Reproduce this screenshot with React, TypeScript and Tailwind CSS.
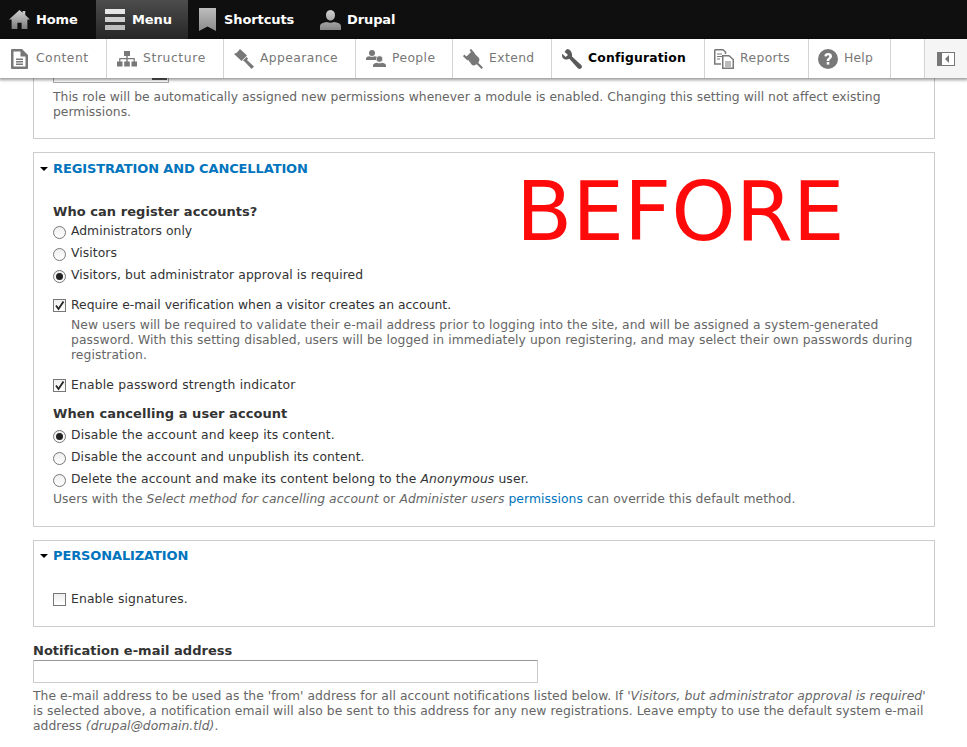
const Home = () => (
	<svg viewBox="0 0 20 18" className="w-[21px] h-[19px] shrink-0">
		<defs>
			<linearGradient id="g" x1="0" y1="0" x2="0" y2="1">
				<stop offset="0" stopColor="#d0d0d0" />
				<stop offset="1" stopColor="#7d7d7d" />
			</linearGradient>
		</defs>
		<path d="M10 0 L13 2.6 V1 H15.5 V4.8 L20 9 H17.5 V18 H12 V12 H8 V18 H2.5 V9 H0 Z" fill="url(#g)" />
	</svg>
);

const Bookmark = () => (
	<svg viewBox="0 0 17 23" className="w-[17px] h-[23px] shrink-0">
		<defs>
			<linearGradient id="b" x1="0" y1="0" x2="0" y2="1">
				<stop offset="0" stopColor="#bdbdbd" />
				<stop offset="1" stopColor="#8c8c8c" />
			</linearGradient>
		</defs>
		<path d="M0 0 H17 V23 L8.5 18.5 L0 23 Z" fill="url(#b)" />
	</svg>
);

const Person = () => (
	<svg viewBox="0 0 21 20" className="w-[21px] h-[20px] shrink-0">
		<defs>
			<linearGradient id="p" x1="0" y1="0" x2="0" y2="1">
				<stop offset="0" stopColor="#d0d0d0" />
				<stop offset="1" stopColor="#858585" />
			</linearGradient>
		</defs>
		<path d="M10.5 0 C13.4 0 15 2.2 15 5 C15 8 13.4 10.5 10.5 10.5 C7.6 10.5 6 8 6 5 C6 2.2 7.6 0 10.5 0 Z M0 20 V16.5 C0 13.5 3 12.6 7 12 C8.8 13 12.2 13 14 12 C18 12.6 21 13.5 21 16.5 V20 Z" fill="url(#p)" />
	</svg>
);

const FileIcon = () => (
	<svg viewBox="0 0 17 20" className="w-[17px] h-[20px] shrink-0" fill="#787878">
		<path fillRule="evenodd" d="M0 1 Q0 0 1 0 H11 L17 6 V19 Q17 20 16 20 H1 Q0 20 0 19 Z M2.5 2.5 V17.5 H14.5 V7.5 H9.5 V2.5 Z" />
		<path d="M5 9.5 H12 V11 H5 Z M5 12 H12 V13.5 H5 Z M5 14.5 H12 V16 H5 Z" />
	</svg>
);

const Sitemap = () => (
	<svg viewBox="0 0 20 16" className="w-[20px] h-[16px] shrink-0" fill="#787878">
		<path d="M7 0 H13 V5 H10.7 V7 H17.8 V10.5 H20 V15.5 H14.5 V10.5 H16.6 V8.2 H10.7 V10.5 H12.8 V15.5 H7.2 V10.5 H9.3 V8.2 H3.4 V10.5 H5.5 V15.5 H0 V10.5 H2.2 V7 H9.3 V5 H7 Z" />
	</svg>
);

const Brush = () => (
	<svg viewBox="0 0 20 20" className="w-[20px] h-[20px] shrink-0" fill="#787878">
		<path d="M6 0 L13 6.5 L7.5 12 L0 5 L3 3.5 Z" />
		<path d="M9 11.5 L12.5 8 L14 9.5 L13 11 L20 17.5 L17.5 20 L11 13 Z" />
	</svg>
);

const People = () => (
	<svg viewBox="0 0 20 17" className="w-[20px] h-[17px] shrink-0" fill="#787878">
		<circle cx="6" cy="3" r="3" />
		<path d="M0 10 V8.5 C0 7 2 6.5 3.5 6.3 C5 7 7 7 8.5 6.3 C10 6.5 12 7 12 8.5 V10 Z" />
		<circle cx="13.5" cy="9" r="3.2" stroke="#fff" strokeWidth="0.6" />
		<path d="M7 17 V15.3 C7 13.5 9.5 13 11 12.8 C12.5 13.5 14.5 13.5 16 12.8 C17.5 13 20 13.5 20 15.3 V17 Z" />
	</svg>
);

const Plug = () => (
	<svg viewBox="0 0 20 20" className="w-[20px] h-[20px] shrink-0" fill="#787878">
		<path d="M3 8 L9 2 L16 9 C17 11 16 13 14.5 14.5 C13 16 11 17 9 16 Z" />
		<path d="M6.5 1 L8.2 0 L12 4.5 L10 6 Z M0 7.2 L1.2 5.5 L6 9.5 L4.5 11.5 Z" />
		<path d="M13.5 15 L15 13.5 L20 18.5 L18.5 20 Z" />
	</svg>
);

const Wrench = () => (
	<svg viewBox="0 0 20 20" className="w-[20px] h-[20px] shrink-0" fill="#5a5a5a">
		<path d="M5 0 L2.5 2.8 L6 6 L3.5 8 L0.3 4.8 C-0.5 7.5 0.5 10 3.5 10.5 C5 10.8 6.3 10.5 7.3 9.8 L15.8 19.2 C16.8 20.2 18.2 20.2 19.2 19.3 C20.2 18.3 20.2 17 19.2 16 L10 7.5 C10.6 4 8.5 0 5 0 Z" />
	</svg>
);

const Reports = () => (
	<svg viewBox="0 0 20 20" className="w-[20px] h-[20px] shrink-0" fill="none" stroke="#787878">
		<path d="M0.75 0.75 H9 L11.5 3 V5" strokeWidth="1.5" />
		<path d="M0.75 0.75 V15 H7" strokeWidth="1.5" />
		<path d="M3 5 H8 M3 7.5 H8 M3 10 H6" strokeWidth="1.2" />
		<path d="M8.75 6.75 H15 L19.25 10.5 V19.25 H8.75 Z" strokeWidth="1.5" fill="#fff" />
		<path d="M11 13 H17 M11 15 H17 M11 17 H17" strokeWidth="1.2" />
	</svg>
);

const Help = () => (
	<svg viewBox="0 0 20 20" className="w-[20px] h-[20px] shrink-0">
		<circle cx="10" cy="10" r="10" fill="#787878" />
		<path d="M6.3 7.2 C6.5 4.8 8.2 4 10 4 C12.3 4 14 5.2 14 7.2 C14 9.8 11.3 9.8 11.3 12 H8.7 C8.7 9 11.2 9 11.2 7.4 C11.2 6.6 10.8 6.2 10 6.2 C9.2 6.2 8.9 6.8 8.8 7.6 Z" fill="#fff" />
		<rect x="8.7" y="13" width="2.6" height="2.6" fill="#fff" />
	</svg>
);

const tray = [
	{ label: "Content", icon: <FileIcon />, width: "w-[107px]", pl: "pl-[11px]", gap: "gap-2", track: "tracking-[0.5px]" },
	{ label: "Structure", icon: <Sitemap />, width: "w-[117px]", pl: "pl-[10px]", gap: "gap-[6px]", track: "tracking-[0.6px]" },
	{ label: "Appearance", icon: <Brush />, width: "w-[132px]", pl: "pl-[10px]", gap: "gap-[6px]", track: "tracking-[0.4px]" },
	{ label: "People", icon: <People />, width: "w-[97px]", pl: "pl-[10px]", gap: "gap-[6px]", track: "tracking-[0.4px]" },
	{ label: "Extend", icon: <Plug />, width: "w-[99px]", pl: "pl-[10px]", gap: "gap-[6px]", track: "tracking-[0.4px]" },
	{ label: "Configuration", icon: <Wrench />, width: "w-[153px]", pl: "pl-[10px]", gap: "gap-[6px]", track: "tracking-[0.2px]", active: true },
	{ label: "Reports", icon: <Reports />, width: "w-[104px]", pl: "pl-[9px]", gap: "gap-[6px]", track: "tracking-[0.4px]" },
	{ label: "Help", icon: <Help />, width: "w-[82px]", pl: "pl-[9px]", gap: "gap-[6px]", track: "tracking-[0.2px]" },
];

const Radio = ({ checked = false }: { checked?: boolean }) => (
	<span className="w-[13px] h-[13px] shrink-0 translate-y-[1px] rounded-full border border-[#777] bg-gradient-to-b from-[#eee] to-white flex items-center justify-center">
		{checked && <span className="w-[7px] h-[7px] rounded-full bg-[#222]" />}
	</span>
);

const Check = ({ checked = false }: { checked?: boolean }) => (
	<span className="w-[13px] h-[13px] shrink-0 border border-[#777] bg-gradient-to-b from-[#eee] to-white flex items-center justify-center">
		{checked && (
			<svg viewBox="0 0 11 11" className="w-[11px] h-[11px]">
				<path d="M2 5.5 L4.5 9 L9.5 1.5" fill="none" stroke="#222" strokeWidth="1.8" />
			</svg>
		)}
	</span>
);

const Option = ({ children, className = "" }: { children: React.ReactNode; className?: string }) => (
	<div className={`flex items-center gap-[5px] h-[16px] pl-[19px] text-[12.35px] leading-[16px] text-[#333] ${className}`}>{children}</div>
);

const Legend = ({ children }: { children: React.ReactNode }) => (
	<div className="flex items-center h-[16px] pl-[6px] gap-[5px] text-[13px] font-bold leading-[16px] text-[#0074bd] tracking-[-0.12px]">
		<span className="w-0 h-0 border-x-[4px] border-x-transparent border-t-[4px] border-t-black" />
		{children}
	</div>
);

const App = () => {
	return (
		<div className="relative h-[747px] overflow-hidden bg-white font-['DejaVu_Sans',sans-serif] text-[#333]">
			<div className="relative z-10">
				<div className="flex h-[39px] bg-[#0f0f0f] text-[13px] font-bold text-white tracking-[-0.1px]">
					<div className="flex items-center w-[96px] pl-[9px] gap-[6px]">
						<Home />
						Home
					</div>
					<div className="flex items-center w-[92px] pl-[9px] gap-[7px] bg-gradient-to-b from-[#4d4d4d] to-[#262626]">
						<span className="flex flex-col gap-[3px] w-[20px] shrink-0">
							<span className="h-[5px] bg-[#e6e6e6]" />
							<span className="h-[5px] bg-[#cfcfcf]" />
							<span className="h-[5px] bg-[#bdbdbd]" />
						</span>
						Menu
					</div>
					<div className="flex items-center w-[120px] pl-[11px] gap-[8px]">
						<Bookmark />
						Shortcuts
					</div>
					<div className="flex items-center pl-[12px] gap-[6px]">
						<Person />
						Drupal
					</div>
				</div>
				<div className="flex h-[39px] bg-white shadow-[0_1px_3px_1px_rgba(0,0,0,0.4)] text-[12.35px] text-[#777]">
					{tray.map((item) => (
						<div
							key={item.label}
							className={`flex items-center ${item.width} ${item.pl} ${item.gap} ${item.track} border-r border-[#d4d4d4] ${item.active ? "font-bold text-black" : ""}`}
						>
							{item.icon}
							{item.label}
						</div>
					))}
					<div className="w-[34px] border-r border-[#d4d4d4]" />
					<div className="flex-1 bg-[#f5f5f5] flex items-center pl-[12px]">
						<span className="flex w-[18px] h-[14px] border border-[#787878] bg-white">
							<span className="w-[4px] bg-[#787878]" />
							<span className="flex-1 flex items-center justify-center pr-[2px]">
								<span className="w-0 h-0 border-y-[4px] border-y-transparent border-r-[4px] border-r-[#777]" />
							</span>
						</span>
					</div>
				</div>
			</div>

			<div className="pl-[33px] pr-[32px]">
				<div className="h-[61px] border-x border-b border-[#ccc] px-[19px]">
					<div className="flex justify-end pr-[1px] w-[116px] h-[5px] border-x border-b border-[#aaa]">
						<span className="w-[15px] h-[2px] bg-[#555]" />
					</div>
					<p className="mt-[7px] text-[12.35px] leading-[15px] tracking-[0.025px] text-[#666]">
						This role will be automatically assigned new permissions whenever a module is enabled. Changing this setting will not affect existing permissions.
					</p>
				</div>

				<div className="relative mt-[13px] h-[375px] border border-[#ccc] pt-[8px]">
					<Legend>REGISTRATION AND CANCELLATION</Legend>
					<div className="mt-[27px] pl-[19px] text-[13px] font-bold leading-[16px] tracking-[0.05px] text-[#333]">Who can register accounts?</div>
					<Option className="mt-[3px] tracking-[0.03px]">
						<Radio />
						Administrators only
					</Option>
					<Option className="mt-[6px] tracking-[0.08px]">
						<Radio />
						Visitors
					</Option>
					<Option className="mt-[6px] tracking-[0.08px]">
						<Radio checked />
						Visitors, but administrator approval is required
					</Option>
					<Option className="mt-[14px] tracking-[0.015px]">
						<Check checked />
						Require e-mail verification when a visitor creates an account.
					</Option>
					<p className="mt-[5px] ml-[37px] mr-[20px] text-[12.35px] leading-[15px] tracking-[0.06px] text-[#666]">
						New users will be required to validate their e-mail address prior to logging into the site, and will be assigned a system-generated password. With this setting disabled, users will be logged in immediately upon registering, and may select their own passwords during registration.
					</p>
					<Option className="mt-[14px] tracking-[0.17px]">
						<Check checked />
						Enable password strength indicator
					</Option>
					<div className="mt-[13px] pl-[19px] text-[13px] font-bold leading-[16px] tracking-[0.05px] text-[#333]">When cancelling a user account</div>
					<Option className="mt-[5px] tracking-[0.15px]">
						<Radio checked />
						Disable the account and keep its content.
					</Option>
					<Option className="mt-[6px] tracking-[0.12px]">
						<Radio />
						Disable the account and unpublish its content.
					</Option>
					<Option className="mt-[6px] tracking-[0.12px]">
						<Radio />
						<span>
							Delete the account and make its content belong to the <em>Anonymous</em> user.
						</span>
					</Option>
					<p className="mt-[5px] pl-[19px] text-[12.35px] leading-[15px] tracking-[0.055px] text-[#666]">
						Users with the <em>Select method for cancelling account</em> or <em>Administer users</em> <a className="text-[#0074bd]">permissions</a> can override this default method.
					</p>
					<div className="absolute left-[482px] top-[-1px] text-[82px] leading-[120px] text-[#ff0a0a]">BEFORE</div>
				</div>

				<div className="mt-[13px] h-[87px] border border-[#ccc] pt-[7px]">
					<Legend>PERSONALIZATION</Legend>
					<Option className="mt-[27px] tracking-[0.13px]">
						<Check />
						Enable signatures.
					</Option>
				</div>

				<div className="mt-[16px] text-[13px] font-bold leading-[16px] tracking-[0.03px] text-[#333]">Notification e-mail address</div>
				<div className="mt-[1px] w-[505px] h-[23px] border border-[#ccc] border-t-[#999]" />
				<p className="mt-[6px] text-[12.35px] leading-[15px] tracking-[0.045px] text-[#666] w-[902px]">
					The e-mail address to be used as the 'from' address for all account notifications listed below. If '<em>Visitors, but administrator approval is required</em>' is selected above, a notification email will also be sent to this address for any new registrations. Leave empty to use the default system e-mail address <em>(drupal@domain.tld)</em>.
				</p>
			</div>
		</div>
	);
};

export default App;
